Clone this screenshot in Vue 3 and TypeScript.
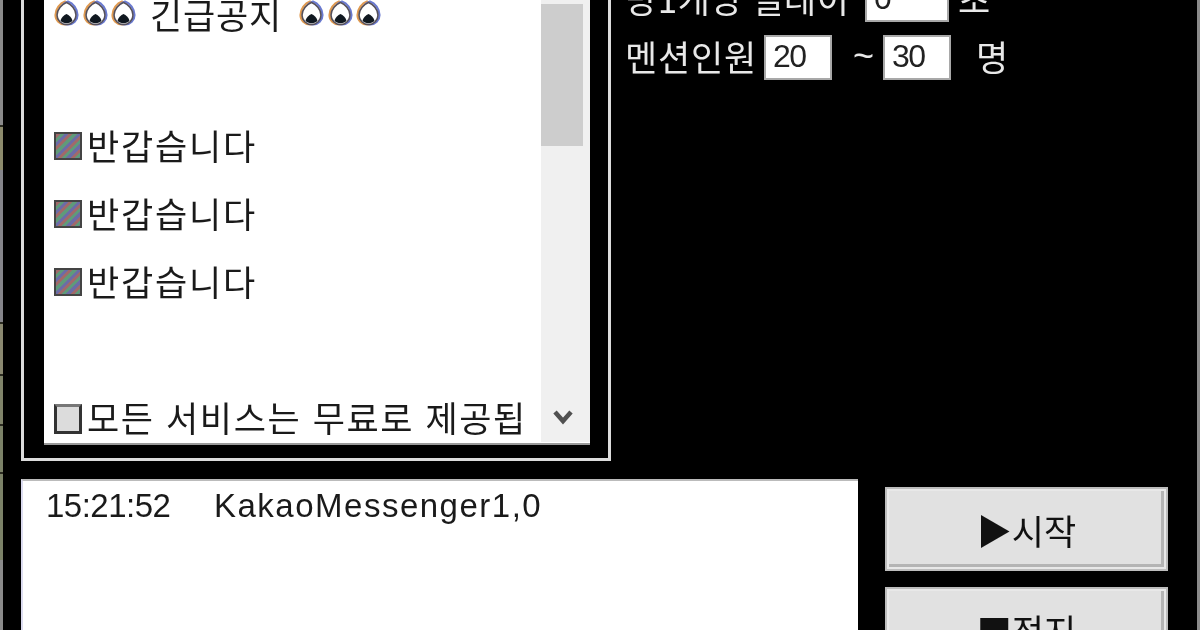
<script setup lang="ts">
const greetings: string[] = ['반갑습니다', '반갑습니다', '반갑습니다']
const flames: number[] = [1, 2, 3]
</script>

<template>
  <div class="screen">
    <div class="edge edge-left"></div>
    <div class="main">
      <div class="top">
        <section class="panel">
          <div class="inner">
            <div class="list">
              <div class="row notice">
                <span class="flames">
                  <svg v-for="f in flames" :key="'a' + f" class="flame" viewBox="0 0 25 26">
                    <path d="M11 1.500C6 3 1.500 9 1.500 15a9.500 9.500 0 0 0 19 0C20.500 9 16 3 11 1.500Z" fill="none" stroke="#e09a50" stroke-width="2.200" />
                    <path d="M14 1.500C9 3 4.500 9 4.500 15a9.500 9.500 0 0 0 19 0C23.500 9 19 3 14 1.500Z" fill="none" stroke="#6a7ad0" stroke-width="2.200" />
                    <path d="M12.500 2.500C8 4 3 9.500 3 15a9.500 9.500 0 0 0 19 0C22 9.500 17 4 12.500 2.500Z" fill="#fff" stroke="#55505a" stroke-width="1.600" />
                    <path d="M12.500 14c-2.500 1-5 3.500-6 6.500 2 3.500 10 3.500 12 0-1-3-3.500-5.500-6-6.500Z" fill="#101820" />
                  </svg>
                </span>
                <span class="notice-text">긴급공지</span>
                <span class="flames">
                  <svg v-for="f in flames" :key="'b' + f" class="flame" viewBox="0 0 25 26">
                    <path d="M11 1.500C6 3 1.500 9 1.500 15a9.500 9.500 0 0 0 19 0C20.500 9 16 3 11 1.500Z" fill="none" stroke="#e09a50" stroke-width="2.200" />
                    <path d="M14 1.500C9 3 4.500 9 4.500 15a9.500 9.500 0 0 0 19 0C23.500 9 19 3 14 1.500Z" fill="none" stroke="#6a7ad0" stroke-width="2.200" />
                    <path d="M12.500 2.500C8 4 3 9.500 3 15a9.500 9.500 0 0 0 19 0C22 9.500 17 4 12.500 2.500Z" fill="#fff" stroke="#55505a" stroke-width="1.600" />
                    <path d="M12.500 14c-2.500 1-5 3.500-6 6.500 2 3.500 10 3.500 12 0-1-3-3.500-5.500-6-6.500Z" fill="#101820" />
                  </svg>
                </span>
              </div>
              <div class="row blank"></div>
              <div v-for="(g, i) in greetings" :key="i" class="row">
                <span class="swatch"></span><span class="greeting">{{ g }}</span>
              </div>
              <div class="row"></div>
              <div class="row">
                <span class="box"></span><span class="service">모든 서비스는 무료로 제공됩</span>
              </div>
            </div>
            <div class="scrollbar">
              <div class="thumb"></div>
              <svg class="chevron" viewBox="0 0 22 18">
                <path d="M3 4l8 9 8-9" fill="none" stroke="#505050" stroke-width="4.5" />
              </svg>
            </div>
          </div>
        </section>
        <section class="settings">
          <div class="field">
            <span class="lbl lbl-delay">방1개당 딜레이</span>
            <span class="input wide">0</span>
            <span class="lbl">초</span>
          </div>
          <div class="field">
            <span class="lbl lbl-mention">멘션인원</span>
            <span class="input">20</span>
            <span class="lbl tilde">~</span>
            <span class="input">30</span>
            <span class="lbl unit">명</span>
          </div>
        </section>
      </div>
      <div class="bottom">
        <div class="log">
          <span class="time">15:21:52</span>
          <span class="name">KakaoMessenger1,0</span>
        </div>
        <div class="buttons">
          <button class="btn" type="button">▶시작</button>
          <button class="btn" type="button">■정지</button>
        </div>
      </div>
    </div>
    <div class="edge edge-right"></div>
  </div>
</template>

<style scoped>
.screen {
  width: 1200px;
  height: 630px;
  overflow: hidden;
  display: flex;
  background: #000;
  color: #1a1a1a;
  font-family: "Noto Sans CJK KR", "Liberation Sans", sans-serif;
  font-size: 35px;
  filter: blur(0.55px);
}
.edge { flex: none; height: 630px; width: 3px; }
.edge-left {
  background: linear-gradient(#8a8a8a 0 125px, #2a2a20 125px 127px, #8c8a6c 127px 170px, #85858a 170px 322px, #2a2a20 322px 324px, #8a8870 324px 374px, #2a2a20 374px 376px, #80846a 376px 424px, #2a2a20 424px 426px, #7c8268 426px 472px, #2a2a20 472px 474px, #7c8268 474px 560px, #8a8a8a 560px);
}
.edge-right { background: #8a8a8a; }
.main { flex: 1; padding-left: 18px; margin-top: -40px; }
.top { display: flex; }
.panel {
  width: 590px;
  height: 501px;
  box-sizing: border-box;
  border: 3px solid #dcdcdc;
  padding: 0 18px 13px 20px;
}
.inner {
  height: 100%;
  display: flex;
  background: #fff;
  border-bottom: 2px solid #999;
  box-sizing: border-box;
}
.list { flex: 1; padding: 16px 0 0 10px; }
.row {
  height: 68px;
  display: flex;
  align-items: center;
  white-space: nowrap;
  line-height: 1;
}
.blank { height: 63px; }
.notice-text { margin: 0 17px 0 14px; letter-spacing: 0.8px; }
.flames { display: flex; gap: 3.5px; }
.flame { width: 25px; height: 26px; }
.greeting { letter-spacing: 1.8px; }
.swatch {
  width: 28px;
  height: 28px;
  margin: 4px 5px 0 0;
  flex: none;
  box-sizing: border-box;
  border: 2px solid #444;
  background: repeating-linear-gradient(135deg, #a06a6a 0 3px, #5f9a7a 3px 6px, #6c6ca6 6px 9px);
}
.box {
  width: 28px;
  height: 30px;
  margin: 6px 5px 0 0;
  flex: none;
  box-sizing: border-box;
  border: 3px solid #333;
  border-top-color: #777;
  background: #dcdcdc;
}
.service { letter-spacing: 1.6px; word-spacing: 2px; }
.scrollbar {
  width: 49px;
  flex: none;
  background: #f0f0f0;
  display: flex;
  flex-direction: column;
  align-items: flex-start;
  margin-bottom: 1px;
}
.thumb {
  width: 42px;
  height: 142px;
  margin-top: 41px;
  background: #cdcdcd;
}
.chevron { width: 22px; height: 18px; margin: auto 0 16px 11px; }
.settings { margin: 17px 0 0 14px; color: #e8e8e8; }
.field { display: flex; align-items: center; height: 45px; margin-bottom: 13px; white-space: nowrap; }
.lbl { margin-top: -4px; }
.lbl-delay { width: 240px; letter-spacing: 0.5px; }
.lbl-mention { width: 139px; letter-spacing: 0.8px; }
.input {
  width: 68px;
  height: 45px;
  box-sizing: border-box;
  background: #fff;
  color: #222;
  border: 2px solid #a8a8a8;
  padding-left: 7px;
  font-size: 32px;
  letter-spacing: -1.5px;
  font-family: "Liberation Sans", sans-serif;
  line-height: 39px;
}
.wide { width: 84px; margin-right: 9px; }
.tilde {
  width: 51px;
  box-sizing: border-box;
  padding-left: 21px;
  font-family: "Liberation Sans", sans-serif;
  font-size: 36px;
}
.unit { margin-left: 25px; }
.bottom { display: flex; margin-top: 18px; }
.log {
  width: 837px;
  height: 300px;
  flex: none;
  box-sizing: border-box;
  background: #fff;
  border-top: 2px solid #bbb;
  border-left: 2px solid #dcdcf0;
  padding: 2px 0 0 23px;
  font-family: "Liberation Sans", sans-serif;
  font-size: 33px;
  white-space: pre;
  display: flex;
  align-items: flex-start;
  line-height: 46px;
}
.time { width: 168px; letter-spacing: -0.5px; }
.name { letter-spacing: 1.5px; }
.buttons {
  margin: 8px 0 0 27px;
  display: flex;
  flex-direction: column;
  gap: 16px;
}
.btn {
  width: 283px;
  height: 84px;
  box-sizing: border-box;
  background: #e1e1e1;
  border: 2px solid #bdbdbd;
  box-shadow: inset 0 0 0 2px #e8e8e8, inset -3px -3px 0 2px #b4b4b4;
  color: #111;
  font: inherit;
  font-size: 35px;
  padding: 0;
}
</style>
